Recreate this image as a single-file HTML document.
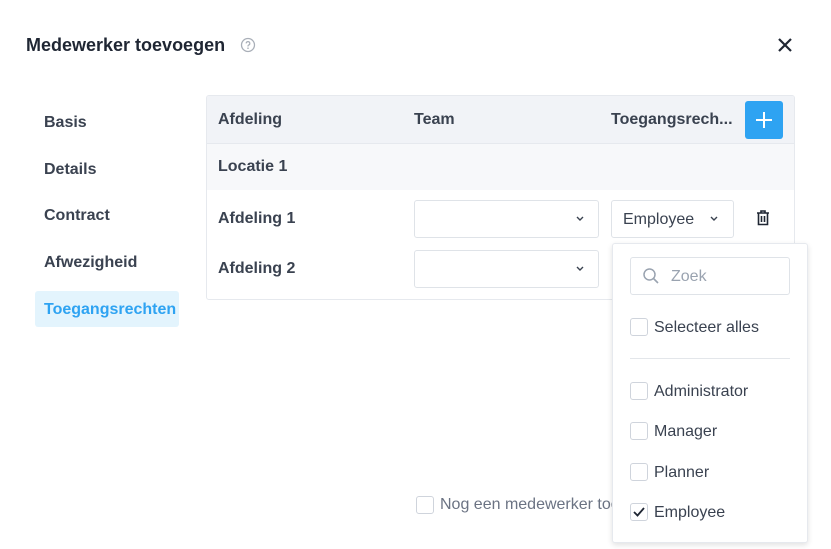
<!DOCTYPE html>
<html><head><meta charset="utf-8"><style>
*{box-sizing:border-box;margin:0;padding:0}
body{width:831px;height:549px;background:#fff;font-family:"Liberation Sans",sans-serif;color:#3a4250;position:relative;overflow:hidden;font-size:16px}
.a{position:absolute;white-space:nowrap}
.t{line-height:20px;transform:translateY(-9px)}
.cb{position:absolute;width:18px;height:18px;border:1px solid #cfd4dc;border-radius:3px;background:#fff}
.sel{position:absolute;border:1px solid #dfe3e8;border-radius:3px;background:#fff}
</style></head><body>
<div class="a t" style="left:26px;top:44px;font-size:18px;font-weight:bold;color:#1f2633">Medewerker toevoegen</div>
<svg class="a" style="left:240px;top:37px" width="16" height="16" viewBox="0 0 16 16"><circle cx="8" cy="8" r="6.5" fill="none" stroke="#a9afb8" stroke-width="1.3"/><path d="M6.2 6.4a1.8 1.8 0 1 1 2.4 1.7c-.5.2-.6.5-.6 1v.4" fill="none" stroke="#a9afb8" stroke-width="1.2"/><circle cx="8" cy="11.2" r=".8" fill="#a9afb8"/></svg>
<svg class="a" style="left:777px;top:37px" width="16" height="16" viewBox="0 0 16 16"><path d="M2 2L14 14M14 2L2 14" stroke="#1f2633" stroke-width="2.2"/></svg>

<div class="a t" style="left:44px;top:122px;font-weight:bold">Basis</div>
<div class="a t" style="left:44px;top:169px;font-weight:bold">Details</div>
<div class="a t" style="left:44px;top:215px;font-weight:bold">Contract</div>
<div class="a t" style="left:44px;top:262px;font-weight:bold">Afwezigheid</div>
<div class="a" style="left:35px;top:291px;width:144px;height:36px;background:#e3f4fd;border-radius:3px"></div>
<div class="a t" style="left:44px;top:309px;font-weight:bold;color:#2ea3f2">Toegangsrechten</div>

<div class="a" style="left:206px;top:95px;width:589px;height:205px;border:1px solid #e6e9ee;border-radius:3px;overflow:hidden">
 <div class="a" style="left:0;top:0;width:589px;height:48px;background:#f1f3f7;border-bottom:1px solid #e6e9ee"></div>
 <div class="a" style="left:0;top:48px;width:589px;height:46px;background:#f7f8fa"></div>
</div>
<div class="a t" style="left:218px;top:119px;font-weight:bold">Afdeling</div>
<div class="a t" style="left:414px;top:119px;font-weight:bold">Team</div>
<div class="a t" style="left:611px;top:119px;font-weight:bold">Toegangsrech...</div>
<div class="a" style="left:745px;top:101px;width:38px;height:38px;background:#2ea3f2;border-radius:3px"></div>
<svg class="a" style="left:755px;top:111px" width="18" height="18"><path d="M9 1V17M1 9H17" stroke="#fff" stroke-width="2"/></svg>
<div class="a t" style="left:218px;top:166px;font-weight:bold">Locatie 1</div>
<div class="a t" style="left:218px;top:218px;font-weight:bold">Afdeling 1</div>
<div class="a t" style="left:218px;top:268px;font-weight:bold">Afdeling 2</div>
<div class="sel" style="left:414px;top:200px;width:185px;height:38px"></div>
<div class="sel" style="left:414px;top:250px;width:185px;height:38px"></div>
<div class="sel" style="left:611px;top:200px;width:123px;height:38px"></div>
<svg class="a" style="left:576px;top:216px" width="8" height="6"><path d="M1 1L4 4L7 1" fill="none" stroke="#3a4250" stroke-width="1.4"/></svg>
<svg class="a" style="left:576px;top:266px" width="8" height="6"><path d="M1 1L4 4L7 1" fill="none" stroke="#3a4250" stroke-width="1.4"/></svg>
<svg class="a" style="left:710px;top:216px" width="8" height="6"><path d="M1 1L4 4L7 1" fill="none" stroke="#3a4250" stroke-width="1.4"/></svg>
<div class="a t" style="left:623px;top:219px;color:#3a4250">Employee</div>
<svg class="a" style="left:756px;top:210px" width="14" height="16" viewBox="0 0 14 16"><path d="M1 3H13M5 3V1H9V3M2.5 3.5V14.5H11.5V3.5M5.5 6V12M8.5 6V12" fill="none" stroke="#1f2633" stroke-width="1.6"/></svg>

<div class="cb" style="left:416px;top:496px"></div>
<div class="a t" style="left:440px;top:504px;color:#6b7383">Nog een medewerker toevoegen</div>

<div class="a" style="left:612px;top:243px;width:196px;height:300px;background:#fff;border:1px solid #e6e9ee;border-radius:3px;box-shadow:0 2px 6px rgba(0,0,0,.12)"></div>
<div class="sel" style="left:630px;top:257px;width:160px;height:38px"></div>
<svg class="a" style="left:642px;top:267px" width="18" height="18"><circle cx="7.5" cy="7.5" r="5.5" fill="none" stroke="#9aa3b0" stroke-width="1.5"/><path d="M11.5 11.5L16 16" stroke="#9aa3b0" stroke-width="1.6"/></svg>
<div class="a t" style="left:671px;top:276px;color:#9aa3b0">Zoek</div>
<div class="cb" style="left:630px;top:318px"></div>
<div class="a t" style="left:654px;top:327px">Selecteer alles</div>
<div class="a" style="left:630px;top:358px;width:160px;height:1px;background:#e3e6ea"></div>
<div class="cb" style="left:630px;top:382px"></div><div class="a t" style="left:654px;top:391px">Administrator</div>
<div class="cb" style="left:630px;top:422px"></div><div class="a t" style="left:654px;top:431px">Manager</div>
<div class="cb" style="left:630px;top:463px"></div><div class="a t" style="left:654px;top:472px">Planner</div>
<div class="cb" style="left:630px;top:503px"></div>
<svg class="a" style="left:632px;top:506px" width="14" height="12"><path d="M2 6L5.5 9.5L12 2" fill="none" stroke="#1f2633" stroke-width="1.8"/></svg>
<div class="a t" style="left:654px;top:512px">Employee</div>
</body></html>
